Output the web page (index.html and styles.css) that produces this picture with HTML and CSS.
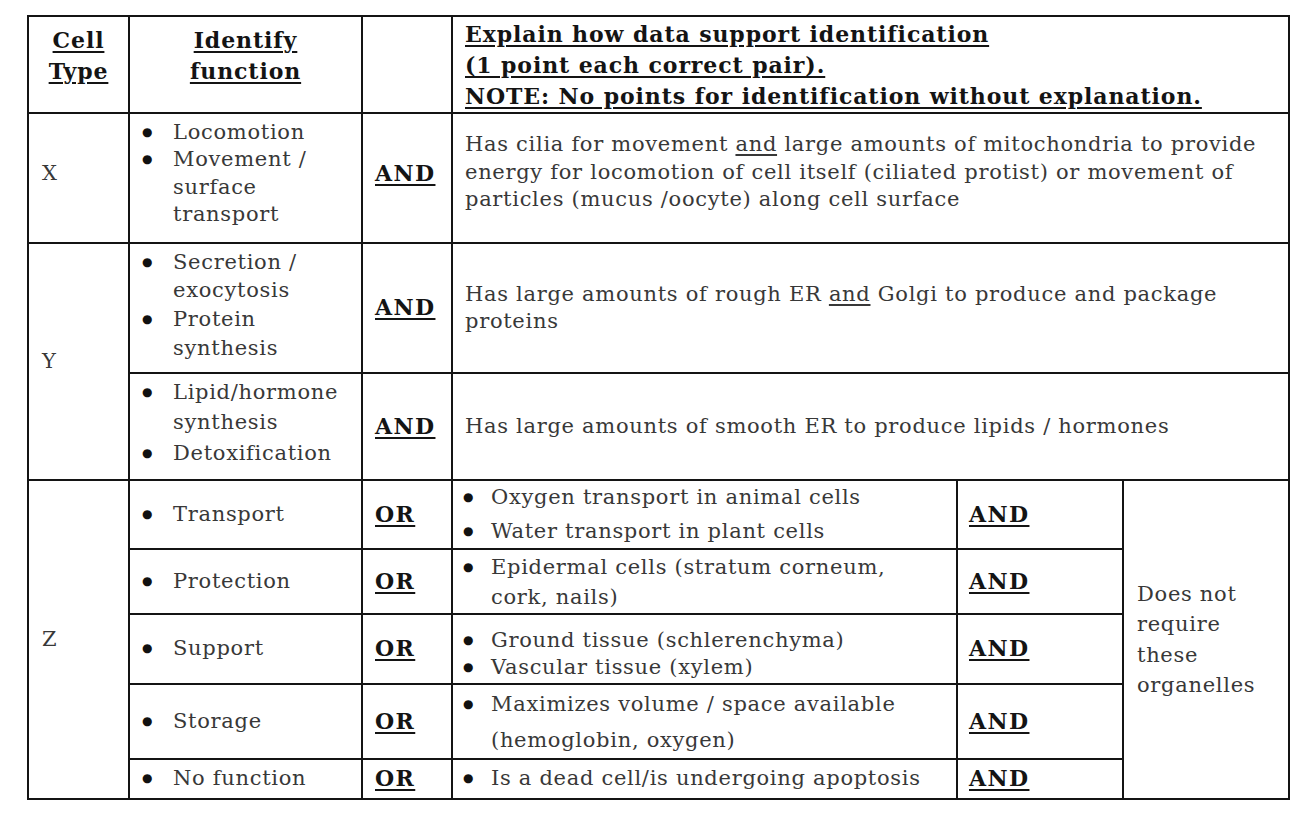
FILE: index.html
```html
<!DOCTYPE html>
<html lang="en">
<head>
<meta charset="utf-8">
<title>Cell type rubric</title>
<link rel="stylesheet" href="styles.css">
</head>
<body>
<div class="page">
<table class="rubric">
  <colgroup>
    <col class="c-type">
    <col class="c-func">
    <col class="c-conj">
    <col class="c-expl">
    <col class="c-and">
    <col class="c-note">
  </colgroup>
  <tr class="r-head">
    <th class="h-center"><span class="u">Cell<br>Type</span></th>
    <th class="h-center"><span class="u">Identify<br>function</span></th>
    <th></th>
    <th colspan="3" class="h-expl"><span class="u">Explain how data support identification</span><br><span class="u">(1 point each correct pair).</span><br><span class="u">NOTE: No points for identification without explanation.</span></th>
  </tr>
  <tr class="r-x">
    <td class="type">X</td>
    <td class="func"><ul><li>Locomotion</li><li>Movement / surface transport</li></ul></td>
    <td class="conj">AND</td>
    <td colspan="3" class="expl">Has cilia for movement <span class="ul">and</span> large amounts of mitochondria to provide energy for locomotion of cell itself (ciliated protist) or movement of particles (mucus /oocyte) along cell surface</td>
  </tr>
  <tr class="r-y1">
    <td class="type" rowspan="2">Y</td>
    <td class="func"><ul><li>Secretion / exocytosis</li><li>Protein synthesis</li></ul></td>
    <td class="conj">AND</td>
    <td colspan="3" class="expl">Has large amounts of rough ER <span class="ul">and</span> Golgi to produce and package proteins</td>
  </tr>
  <tr class="r-y2">
    <td class="func"><ul><li>Lipid/hormone synthesis</li><li>Detoxification</li></ul></td>
    <td class="conj">AND</td>
    <td colspan="3" class="expl">Has large amounts of smooth ER to produce lipids / hormones</td>
  </tr>
  <tr class="r-z1">
    <td class="type" rowspan="5">Z</td>
    <td class="func"><ul><li>Transport</li></ul></td>
    <td class="conj">OR</td>
    <td class="zlist l-wide"><ul><li>Oxygen transport in animal cells</li><li>Water transport in plant cells</li></ul></td>
    <td class="conj2">AND</td>
    <td class="note" rowspan="5">Does not require these organelles</td>
  </tr>
  <tr class="r-z2">
    <td class="func"><ul><li>Protection</li></ul></td>
    <td class="conj">OR</td>
    <td class="zlist l-mid"><ul><li>Epidermal cells (stratum corneum, cork, nails)</li></ul></td>
    <td class="conj2">AND</td>
  </tr>
  <tr class="r-z3">
    <td class="func"><ul><li>Support</li></ul></td>
    <td class="conj">OR</td>
    <td class="zlist l-tight"><ul><li>Ground tissue (schlerenchyma)</li><li>Vascular tissue (xylem)</li></ul></td>
    <td class="conj2">AND</td>
  </tr>
  <tr class="r-z4">
    <td class="func"><ul><li>Storage</li></ul></td>
    <td class="conj">OR</td>
    <td class="zlist l-loose"><ul><li>Maximizes volume / space available (hemoglobin, oxygen)</li></ul></td>
    <td class="conj2">AND</td>
  </tr>
  <tr class="r-z5">
    <td class="func"><ul><li>No function</li></ul></td>
    <td class="conj">OR</td>
    <td class="zlist"><ul><li>Is a dead cell/is undergoing apoptosis</li></ul></td>
    <td class="conj2">AND</td>
  </tr>
</table>
</div>
</body>
</html>
```

FILE: styles.css
```css
html, body {
  margin: 0;
  padding: 0;
  background: #ffffff;
}

body {
  font-family: "DejaVu Serif", "Liberation Serif", serif;
  color: #383838;
}

.page {
  padding: 15px 0 0 27px;
}

.rubric {
  border-collapse: collapse;
  table-layout: fixed;
  width: 1261px;
}

.c-type { width: 101px; }
.c-func { width: 233px; }
.c-conj { width: 90px; }
.c-expl { width: 505px; }
.c-and  { width: 166px; }
.c-note { width: 166px; }

.rubric th,
.rubric td {
  border: 2px solid #141414;
  padding: 0 10px;
  vertical-align: middle;
  text-align: left;
  font-size: 21px;
  letter-spacing: 0.7px;
  line-height: 27.5px;
  font-weight: normal;
}

.r-head { height: 95px; }
.r-x    { height: 130px; }
.r-y1   { height: 130px; }
.r-y2   { height: 107px; }
.r-z1   { height: 69px; }
.r-z2   { height: 65px; }
.r-z3   { height: 70px; }
.r-z4   { height: 75px; }
.r-z5   { height: 40px; }

.rubric th {
  vertical-align: top;
  font-weight: bold;
  font-size: 22px;
  letter-spacing: 0.9px;
  color: #141414;
}

.rubric th.h-center {
  text-align: center;
  padding: 8px 4px 0;
  line-height: 31px;
}

.rubric th.h-expl {
  padding: 2px 10px 0 12px;
  line-height: 31px;
}

.u {
  text-decoration: underline;
  text-decoration-thickness: 2px;
  text-underline-offset: 3px;
}

.ul {
  text-decoration: underline;
  text-decoration-thickness: 1.5px;
  text-underline-offset: 3px;
}

.rubric td.type {
  padding-left: 13px;
}

.rubric td.func {
  padding: 0 8px 0 12px;
}

.rubric td.conj,
.rubric td.conj2 {
  font-weight: bold;
  font-size: 22px;
  letter-spacing: 1.4px;
  color: #141414;
  text-decoration: underline;
  text-decoration-thickness: 2px;
  text-underline-offset: 3px;
}

.rubric td.conj {
  padding-left: 12px;
}

.rubric td.conj2 {
  padding-left: 11px;
}

.rubric td.expl {
  padding: 0 14px 0 12px;
}

.rubric td.zlist {
  padding: 0 25px 0 10px;
}

.rubric td.note {
  padding: 0 25px 0 13px;
  line-height: 30.5px;
}

.rubric .r-x td.func { padding-bottom: 9px; line-height: 27.3px; }
.rubric .r-x td.expl { padding-bottom: 11px; }
.rubric .r-x td.type,
.rubric .r-x td.conj { padding-bottom: 8px; }
.rubric .r-y1 td.func { padding-bottom: 6px; line-height: 28.7px; }
.rubric .r-y2 td.func { padding-bottom: 8px; line-height: 30.5px; }

.rubric ul {
  margin: 0;
  padding: 0;
  list-style: none;
}

.rubric li {
  display: flex;
}

.rubric li::before {
  content: "\25CF";
  flex: 0 0 31px;
  font-size: 12px;
  letter-spacing: 0;
  color: #111;
}

.zlist li::before {
  flex-basis: 28px;
}

.l-wide li + li { margin-top: 6px; }
.rubric td.l-mid { line-height: 30px; }
.rubric td.l-tight { padding-top: 10px; }
.rubric td.l-loose { line-height: 36px; }
```
